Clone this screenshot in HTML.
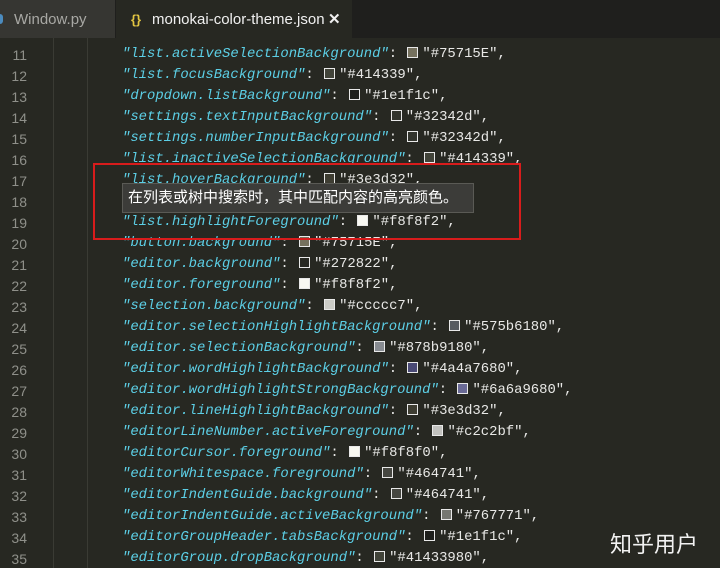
<!DOCTYPE html><html><head><meta charset="utf-8"><style>
body{margin:0;width:720px;height:568px;overflow:hidden;background:#272822;font-family:"Liberation Mono",monospace;position:relative}
.tabs{position:absolute;left:0;top:0;width:720px;height:38px;background:#1f1f1d}
.t1{position:absolute;left:0;top:0;width:115px;height:38px;background:#363632;color:#a8a8a4;font:15px "Liberation Sans",sans-serif;line-height:40px;padding-left:14px;box-sizing:border-box}
.t2{position:absolute;left:116px;top:0;width:236px;height:38px;background:#272822;color:#f0f0f0;font:15px "Liberation Sans",sans-serif;line-height:40px}
.g{position:absolute;top:38px;width:1px;height:530px;background:#3a3b34}
.ln{position:absolute;left:0;width:27px;text-align:right;color:#8f908a;font-size:14px;font-family:"Liberation Sans",sans-serif}
.cd{position:absolute;left:122px;font-size:13.9px;color:#e8e8e6;white-space:pre}
.k{color:#5ccfe6;font-style:italic}
.s{display:inline-block;width:9px;height:9px;border:1.5px solid #e8e8e8;margin:0 4px 0 2px;vertical-align:-1px}
</style></head><body>
<div class="tabs"><div class="t1"><span style="position:absolute;left:-5px;top:14px;width:8px;height:10px;background:#4b8bbe;border-radius:3px"></span>Window.py</div>
<div class="t2"><span style="position:absolute;left:15px;color:#e2c541;font-weight:bold;font-size:13px">{}</span><span style="position:absolute;left:36px">monokai-color-theme.json</span><span style="position:absolute;left:212px;font-weight:bold">✕</span></div></div>
<div class="g" style="left:53px"></div><div class="g" style="left:87px"></div>
<div id="c"></div>
<script>
var L=[["list.activeSelectionBackground","#75715E","#75715e"],["list.focusBackground","#414339","#414339"],["dropdown.listBackground","#1e1f1c","#1e1f1c"],["settings.textInputBackground","#32342d","#32342d"],["settings.numberInputBackground","#32342d","#32342d"],["list.inactiveSelectionBackground","#414339","#414339"],["list.hoverBackground","#3e3d32","#3e3d32"],["",""],["list.highlightForeground","#f8f8f2","#f8f8f2"],["button.background","#75715E","#75715e"],["editor.background","#272822","#272822"],["editor.foreground","#f8f8f2","#f8f8f2"],["selection.background","#ccccc7","#ccccc7"],["editor.selectionHighlightBackground","#575b6180","#575b61"],["editor.selectionBackground","#878b9180","#878b91"],["editor.wordHighlightBackground","#4a4a7680","#4a4a76"],["editor.wordHighlightStrongBackground","#6a6a9680","#6a6a96"],["editor.lineHighlightBackground","#3e3d32","#3e3d32"],["editorLineNumber.activeForeground","#c2c2bf","#c2c2bf"],["editorCursor.foreground","#f8f8f0","#f8f8f0"],["editorWhitespace.foreground","#464741","#464741"],["editorIndentGuide.background","#464741","#464741"],["editorIndentGuide.activeBackground","#767771","#767771"],["editorGroupHeader.tabsBackground","#1e1f1c","#1e1f1c"],["editorGroup.dropBackground","#41433980","#414339"]];
var h="";for(var i=0;i<25;i++){var t=46+i*21;h+='<div class="ln" style="top:'+(t+1)+'px">'+(11+i)+'</div>';var e=L[i];if(e[0])h+='<div class="cd" style="top:'+t+'px"><span class="k">"'+e[0]+'"</span>: <span class="s" style="background:'+e[2]+'"></span>"'+e[1]+'",</div>';}
document.getElementById("c").innerHTML=h;
</script>
<div style="position:absolute;left:122px;top:183px;width:352px;height:30px;background:#3c3c39;border:1px solid #5a5a55;box-sizing:border-box;color:#fff;font:15px 'Liberation Sans','Noto Sans CJK SC',sans-serif;line-height:28px;padding-left:5px">在列表或树中搜索时，其中匹配内容的高亮颜色。</div>
<div style="position:absolute;left:93px;top:163px;width:428px;height:77px;border:2.5px solid #d81c1c;box-sizing:border-box"></div>
<div style="position:absolute;left:610px;top:527px;color:#f2f2f2;font:22px 'Noto Sans CJK SC',sans-serif">知乎用户</div>
</body></html>
